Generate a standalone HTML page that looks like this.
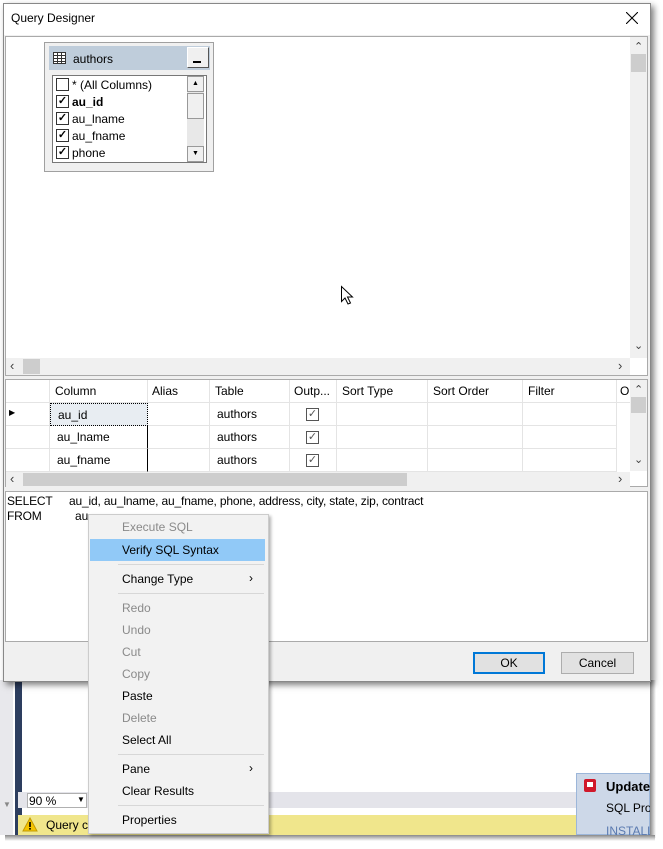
<!DOCTYPE html>
<html><head><style>
*{margin:0;padding:0;box-sizing:border-box}
body{width:663px;height:849px;background:#fff;position:relative;overflow:hidden;font-family:"Liberation Sans",sans-serif;font-size:12px;color:#000}
.a{position:absolute}
.t{position:absolute;white-space:nowrap}
.cb{position:absolute;width:13px;height:13px;border:1px solid #333;background:#fff;font-size:11px;line-height:11px;text-align:center;font-weight:bold}
.gc{position:absolute;border-right:1px solid #e4e4e4;border-bottom:1px solid #e4e4e4;height:23px;line-height:22px;padding-left:7px}
.mi{position:absolute;left:122px;font-size:12px}
.dis{color:#8a8a8a}
.sep{position:absolute;left:118px;width:146px;height:1px;background:#d7d7d7}
</style></head><body>
<div class="a" style="left:0;top:680px;width:13px;height:155px;background:#e8e8ec"></div>
<div class="a" style="left:15px;top:680px;width:7px;height:155px;background:#2d3e5f"></div>
<div class="a" style="left:18px;top:792px;width:560px;height:16px;background:#e4e4ea"></div>
<div class="a" style="left:27px;top:793px;width:60px;height:15px;background:#fff;border:1px solid #b0b0b0"><span class="t" style="left:1px;top:0;font-size:12px">90 %</span><span class="t" style="left:49px;top:1px;font-size:8px">▼</span></div>
<div class="a" style="left:3px;top:800px;font-size:8px;color:#888">▼</div>
<div class="a" style="left:18px;top:815px;width:560px;height:20px;background:#f0e68c"></div>
<svg class="a" style="left:22px;top:817px" width="16" height="15"><path d="M8 1L15 14H1Z" fill="#f5c400" stroke="#c49a00"/><rect x="7.2" y="5" width="1.6" height="5"/><rect x="7.2" y="11" width="1.6" height="1.6"/></svg>
<span class="t" style="left:46px;top:818px;font-size:12px">Query c</span>
<div class="a" style="left:576px;top:773px;width:74px;height:62px;background:#cdd8e8;border:1px solid #9cb6d9"></div>
<div class="a" style="left:584px;top:779px;width:12px;height:13px;background:#d0182a;border-radius:2px"></div>
<div class="a" style="left:587px;top:782px;width:6px;height:5px;background:#fff"></div>
<span class="t" style="left:606px;top:779px;font-weight:bold;font-size:13px">Update</span>
<span class="t" style="left:606px;top:801px">SQL Pro</span>
<span class="t" style="left:606px;top:824px;color:#5a7ab0">INSTALL</span>
<div class="a" style="left:650px;top:680px;width:6px;height:158px;background:linear-gradient(90deg,#888,#fff)"></div>
<div class="a" style="left:5px;top:835px;width:650px;height:6px;background:linear-gradient(#888,#fff)"></div>

<div class="a" style="left:3px;top:3px;width:648px;height:679px;background:#f0f0f0;border:1px solid #888;box-shadow:3px 3px 6px rgba(0,0,0,.5)"></div>
<div class="a" style="left:4px;top:4px;width:646px;height:31px;background:#fff"></div>
<span class="t" style="left:11px;top:11px;font-size:12px">Query Designer</span>
<svg class="a" style="left:626px;top:12px" width="12" height="12"><path d="M0 0L12 12M12 0L0 12" stroke="#000" stroke-width="1.1"/></svg>
<div class="a" style="left:5px;top:36px;width:643px;height:340px;background:#fff;border:1px solid #aaa"></div>
<div class="a" style="left:630px;top:37px;width:17px;height:321px;background:#f0f0f0"></div>
<div class="a" style="left:631px;top:54px;width:15px;height:18px;background:#cdcdcd"></div>
<span class="t" style="left:634px;top:40px;font-size:11px;color:#404040">⌃</span>
<span class="t" style="left:634px;top:339px;font-size:11px;color:#404040">⌄</span>
<div class="a" style="left:6px;top:358px;width:624px;height:17px;background:#f0f0f0"></div>
<div class="a" style="left:23px;top:359px;width:17px;height:15px;background:#cdcdcd"></div>
<span class="t" style="left:10px;top:358px;font-size:13px;color:#404040">‹</span>
<span class="t" style="left:618px;top:358px;font-size:13px;color:#404040">›</span>
<div class="a" style="left:44px;top:42px;width:170px;height:130px;background:#f0f0f0;border:1px solid #a0a0a0"></div>
<div class="a" style="left:49px;top:46px;width:161px;height:24px;background:#bfcddb"></div>
<svg class="a" style="left:53px;top:52px" width="13" height="12"><rect x=".5" y=".5" width="12" height="11" fill="#fff" stroke="#333"/><path d="M.5 3.5H12.5M.5 6.5H12.5M.5 9.5H12.5M4.5 .5V11.5M8.5 .5V11.5" stroke="#333"/></svg>
<span class="t" style="left:73px;top:52px">authors</span>
<div class="a" style="left:187px;top:47px;width:22px;height:21px;background:#f0f0f0;border:1px solid #fff;border-right-color:#555;border-bottom-color:#555"></div>
<div class="a" style="left:193px;top:61px;width:8px;height:2px;background:#000"></div>
<div class="a" style="left:52px;top:75px;width:155px;height:88px;background:#fff;border:1px solid #777"></div>
<div class="a" style="left:187px;top:76px;width:17px;height:86px;background:#e8e8e8"></div>
<div class="a" style="left:187px;top:76px;width:17px;height:16px;background:#f0f0f0;border:1px solid #999;font-size:7px;text-align:center;line-height:14px">▲</div>
<div class="a" style="left:187px;top:93px;width:17px;height:26px;background:#f0f0f0;border:1px solid #999"></div>
<div class="a" style="left:187px;top:146px;width:17px;height:16px;background:#f0f0f0;border:1px solid #999;font-size:7px;text-align:center;line-height:14px">▼</div>
<div class="cb" style="left:56px;top:78px"></div><span class="t" style="left:72px;top:78px">* (All Columns)</span>
<div class="cb" style="left:56px;top:95px">✓</div><span class="t" style="left:72px;top:95px;font-weight:bold">au_id</span>
<div class="cb" style="left:56px;top:112px">✓</div><span class="t" style="left:72px;top:112px">au_lname</span>
<div class="cb" style="left:56px;top:129px">✓</div><span class="t" style="left:72px;top:129px">au_fname</span>
<div class="cb" style="left:56px;top:146px">✓</div><span class="t" style="left:72px;top:146px">phone</span>
<svg class="a" style="left:340px;top:285px" width="20" height="24"><path d="M1.5 1.5V16.5L5 13L8 19L10.5 18L7.5 12H12.5Z" fill="#fff" stroke="#000"/></svg>
<div class="a" style="left:5px;top:379px;width:643px;height:108px;background:#fff;border:1px solid #aaa"></div>
<div class="gc" style="left:6px;top:380px;width:44px"></div>
<div class="gc" style="left:50px;top:380px;width:98px;padding-left:5px">Column</div>
<div class="gc" style="left:148px;top:380px;width:62px;padding-left:4px">Alias</div>
<div class="gc" style="left:210px;top:380px;width:80px;padding-left:5px">Table</div>
<div class="gc" style="left:290px;top:380px;width:47px;padding-left:4px">Outp...</div>
<div class="gc" style="left:337px;top:380px;width:91px;padding-left:5px">Sort Type</div>
<div class="gc" style="left:428px;top:380px;width:95px;padding-left:5px">Sort Order</div>
<div class="gc" style="left:523px;top:380px;width:94px;padding-left:5px">Filter</div>
<div class="gc" style="left:617px;top:380px;width:13px;padding-left:3px;border-right:0">O</div>
<div class="a" style="left:630px;top:380px;width:17px;height:91px;background:#f0f0f0"></div>
<div class="a" style="left:631px;top:397px;width:15px;height:16px;background:#cdcdcd"></div>
<span class="t" style="left:634px;top:383px;font-size:11px;color:#404040">⌃</span>
<span class="t" style="left:634px;top:453px;font-size:11px;color:#404040">⌄</span>
<div class="gc" style="left:6px;top:403px;width:44px"></div><span class="t" style="left:9px;top:408px;font-size:8px">▶</span>
<div class="gc" style="left:50px;top:403px;width:98px;background:#e8edf2;border:1px dotted #000">au_id</div>
<div class="gc" style="left:148px;top:403px;width:62px"></div><div class="gc" style="left:210px;top:403px;width:80px">authors</div>
<div class="gc" style="left:290px;top:403px;width:47px"></div><div class="gc" style="left:337px;top:403px;width:91px"></div><div class="gc" style="left:428px;top:403px;width:95px"></div><div class="gc" style="left:523px;top:403px;width:94px"></div>
<div class="gc" style="left:6px;top:426px;width:44px"></div>
<div class="gc" style="left:50px;top:426px;width:98px;border-right:1px solid #000">au_lname</div>
<div class="gc" style="left:148px;top:426px;width:62px"></div><div class="gc" style="left:210px;top:426px;width:80px">authors</div>
<div class="gc" style="left:290px;top:426px;width:47px"></div><div class="gc" style="left:337px;top:426px;width:91px"></div><div class="gc" style="left:428px;top:426px;width:95px"></div><div class="gc" style="left:523px;top:426px;width:94px"></div>
<div class="gc" style="left:6px;top:449px;width:44px"></div>
<div class="gc" style="left:50px;top:449px;width:98px;border-right:1px solid #000">au_fname</div>
<div class="gc" style="left:148px;top:449px;width:62px"></div><div class="gc" style="left:210px;top:449px;width:80px">authors</div>
<div class="gc" style="left:290px;top:449px;width:47px"></div><div class="gc" style="left:337px;top:449px;width:91px"></div><div class="gc" style="left:428px;top:449px;width:95px"></div><div class="gc" style="left:523px;top:449px;width:94px"></div>
<div class="cb" style="left:306px;top:408px;border-color:#555;font-weight:normal;color:#555">✓</div>
<div class="cb" style="left:306px;top:431px;border-color:#555;font-weight:normal;color:#555">✓</div>
<div class="cb" style="left:306px;top:454px;border-color:#555;font-weight:normal;color:#555">✓</div>
<div class="a" style="left:6px;top:472px;width:624px;height:15px;background:#f0f0f0"></div>
<div class="a" style="left:23px;top:473px;width:384px;height:13px;background:#cdcdcd"></div>
<span class="t" style="left:10px;top:471px;font-size:13px;color:#404040">‹</span>
<span class="t" style="left:618px;top:471px;font-size:13px;color:#404040">›</span>
<div class="a" style="left:5px;top:491px;width:643px;height:151px;background:#fff;border:1px solid #aaa"></div>
<span class="t" style="left:7px;top:494px;letter-spacing:-0.2px">SELECT</span>
<span class="t" style="left:69px;top:494px;letter-spacing:-0.17px">au_id, au_lname, au_fname, phone, address, city, state, zip, contract</span>
<span class="t" style="left:7px;top:509px;letter-spacing:-0.2px">FROM</span>
<span class="t" style="left:75px;top:509px">au</span>
<div class="a" style="left:473px;top:652px;width:72px;height:22px;background:#e1e1e1;border:2px solid #0078d7;text-align:center;line-height:18px">OK</div>
<div class="a" style="left:561px;top:652px;width:73px;height:22px;background:#e1e1e1;border:1px solid #adadad;text-align:center;line-height:20px">Cancel</div>
<div class="a" style="left:88px;top:514px;width:181px;height:320px;background:#f2f2f2;border:1px solid #ccc;box-shadow:2px 2px 3px rgba(0,0,0,.3)"></div>
<div class="a" style="left:90px;top:539px;width:175px;height:22px;background:#91c9f7"></div>
<span class="mi dis t" style="top:520px">Execute SQL</span>
<span class="mi t" style="top:543px">Verify SQL Syntax</span>
<div class="sep" style="top:564px"></div>
<span class="mi t" style="top:572px">Change Type</span><span class="t" style="left:249px;top:571px;font-size:12px">›</span>
<div class="sep" style="top:593px"></div>
<span class="mi dis t" style="top:601px">Redo</span>
<span class="mi dis t" style="top:623px">Undo</span>
<span class="mi dis t" style="top:645px">Cut</span>
<span class="mi dis t" style="top:667px">Copy</span>
<span class="mi t" style="top:689px">Paste</span>
<span class="mi dis t" style="top:711px">Delete</span>
<span class="mi t" style="top:733px">Select All</span>
<div class="sep" style="top:754px"></div>
<span class="mi t" style="top:762px">Pane</span><span class="t" style="left:249px;top:761px;font-size:12px">›</span>
<span class="mi t" style="top:784px">Clear Results</span>
<div class="sep" style="top:805px"></div>
<span class="mi t" style="top:813px">Properties</span>
</body></html>
